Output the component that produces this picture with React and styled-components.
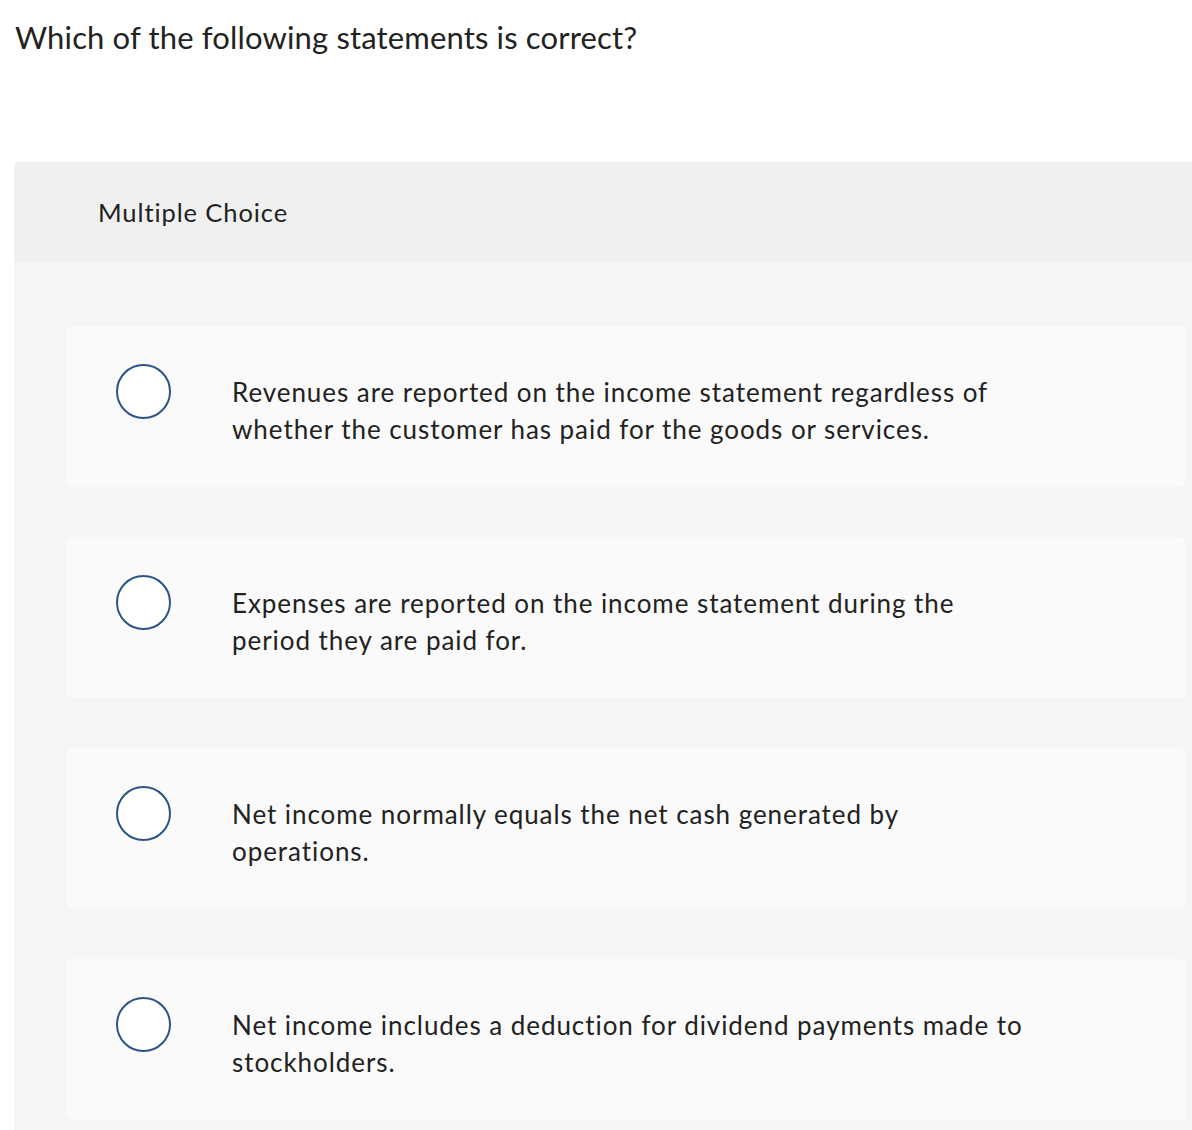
import React from "react";
import styled, { createGlobalStyle } from "styled-components";

const Global = createGlobalStyle`
  html, body { margin: 0; padding: 0; background: #ffffff; }
  body { font-family: Lato, "Open Sans", Arial, sans-serif; color: #222222; }
`;

const Page = styled.div`
  width: 1192px;
  height: 1130px;
  overflow: hidden;
  display: flex;
  flex-direction: column;
`;

const Question = styled.h1`
  margin: 0;
  padding: 17px 0 0 15px;
  font-size: 31px;
  font-weight: 400;
  line-height: 40px;
  color: #222222;
  letter-spacing: 0.15px;
`;

const Panel = styled.section`
  margin: 105px 0 0 14px;
  flex: 1;
  display: flex;
  flex-direction: column;
  border-top-left-radius: 5px;
  overflow: hidden;
`;

const PanelHeader = styled.div`
  height: 100px;
  background: #f0f0f0;
  display: flex;
  align-items: center;
  padding: 0 0 0 84px;
  font-size: 25.5px;
  letter-spacing: 0.9px;
  color: #222222;
`;

const Choices = styled.div`
  flex: 1;
  background: #f5f5f5;
  display: flex;
  flex-direction: column;
  gap: 50px;
  padding: 64px 6px 0 52px;
`;

const Card = styled.label`
  display: flex;
  align-items: flex-start;
  background: #fafafa;
  border-radius: 7px;
  height: 161px;
  box-sizing: border-box;
  padding: 38px 0 0 50px;
`;

const Radio = styled.span`
  flex: none;
  width: 51px;
  height: 51px;
  border-radius: 50%;
  border: 2px solid #2c5485;
  background: #ffffff;
`;

const ChoiceText = styled.span`
  margin-left: 61px;
  margin-top: 10px;
  max-width: 798px;
  font-size: 26px;
  line-height: 37px;
  color: #222222;
  letter-spacing: 0.94px;
`;

const choices = [
  "Revenues are reported on the income statement regardless of whether the customer has paid for the goods or services.",
  "Expenses are reported on the income statement during the period they are paid for.",
  "Net income normally equals the net cash generated by operations.",
  "Net income includes a deduction for dividend payments made to stockholders.",
];

export default function App() {
  return (
    <Page>
      <Global />
      <Question>Which of the following statements is correct?</Question>
      <Panel>
        <PanelHeader>Multiple Choice</PanelHeader>
        <Choices>
          {choices.map((c) => (
            <Card key={c}>
              <Radio />
              <ChoiceText>{c}</ChoiceText>
            </Card>
          ))}
        </Choices>
      </Panel>
    </Page>
  );
}
